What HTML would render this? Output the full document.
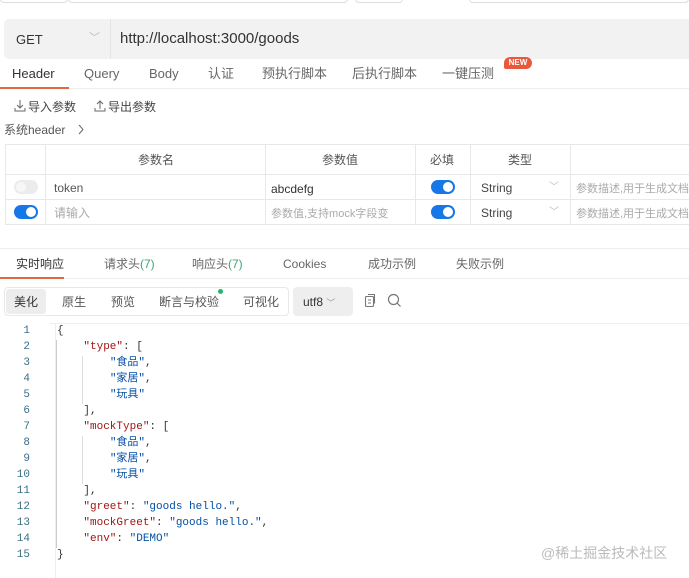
<!DOCTYPE html>
<html><head><meta charset="utf-8"><style>
*{margin:0;padding:0;box-sizing:border-box}
body{width:689px;height:578px;overflow:hidden;background:#fff;font-family:"Liberation Sans","Noto Sans CJK SC",sans-serif;font-size:13px;color:#333;position:relative}
.a{position:absolute;white-space:nowrap;line-height:16px}
.tog{position:absolute;width:24px;height:14px;border-radius:7px}
.tog.on{background:#1677e6}
.tog.on::after{content:"";position:absolute;right:2px;top:2px;width:10px;height:10px;border-radius:50%;background:#fff}
.tog.off{background:#ececec}
.tog.off::after{content:"";position:absolute;left:2px;top:2px;width:10px;height:10px;border-radius:50%;background:#f7f7f7}
.code{position:absolute;font-family:"Liberation Mono","Noto Sans CJK SC",monospace;font-size:11px;line-height:16px}
.k{color:#a31515}.v{color:#0451a5}
.ln{color:#3a6f87;text-align:right;width:30px}
</style></head><body>
<div class="a" style="left:0;top:-10px;width:68px;height:13px;border:1px solid #ddd;border-radius:4px"></div>
<div class="a" style="left:68px;top:-10px;width:280px;height:13px;border:1px solid #ddd;border-radius:4px"></div>
<div class="a" style="left:355px;top:-10px;width:48px;height:13px;border:1px solid #ddd;border-radius:4px"></div>
<div class="a" style="left:469px;top:-10px;width:220px;height:13px;border:1px solid #ddd;border-radius:4px"></div>
<div class="a" style="left:4px;top:19px;width:690px;height:40px;background:#f2f2f2;border-radius:5px"></div>
<div class="a" style="left:110px;top:19px;width:1px;height:40px;background:#e4e4e4"></div>
<div class="a" style="left:16px;top:32px;font-size:13px;color:#333">GET</div>
<div class="a" style="left:89px;top:30px;color:#bbb;font-size:11px">﹀</div>
<div class="a" style="left:120px;top:31px;font-size:15px;color:#333">http://localhost:3000/goods</div>
<div class="a" style="left:12px;top:66px">Header</div>
<div class="a" style="left:84px;top:66px;color:#666">Query</div>
<div class="a" style="left:149px;top:66px;color:#666">Body</div>
<div class="a" style="left:208px;top:66px;color:#666">认证</div>
<div class="a" style="left:262px;top:66px;color:#666">预执行脚本</div>
<div class="a" style="left:352px;top:66px;color:#666">后执行脚本</div>
<div class="a" style="left:442px;top:66px;color:#666">一键压测</div>
<div class="a" style="left:504px;top:57px;width:28px;height:12px;background:#e8593b;border-radius:6px 6px 6px 2px;color:#fff;font-size:8px;font-weight:bold;text-align:center;line-height:12px">NEW</div>
<div class="a" style="left:0;top:88px;width:689px;height:1px;background:#eee"></div>
<div class="a" style="left:0;top:87px;width:69px;height:2px;background:#e2693f"></div>
<svg class="a" style="left:14px;top:99px" width="12" height="13" viewBox="0 0 12 13" fill="none" stroke="#666" stroke-width="1"><path d="M6 1v8M3 6l3 3 3-3M1 9v3h10V9"/></svg>
<div class="a" style="left:28px;top:99px;font-size:12px;color:#444">导入参数</div>
<svg class="a" style="left:94px;top:99px" width="12" height="13" viewBox="0 0 12 13" fill="none" stroke="#666" stroke-width="1"><path d="M6 10V2M3 5l3-3 3 3M1 9v3h10V9"/></svg>
<div class="a" style="left:108px;top:99px;font-size:12px;color:#444">导出参数</div>
<div class="a" style="left:4px;top:122px;font-size:12px;color:#555">系统header</div>
<svg class="a" style="left:77px;top:124px" width="8" height="11" viewBox="0 0 8 11" fill="none" stroke="#666"><path d="M2 1l4 4.5L2 10"/></svg>
<div class="a" style="left:5px;top:144px;width:690px;height:81px;border:1px solid #e8e8e8"></div>
<div class="a" style="left:5px;top:174px;width:690px;height:1px;background:#e8e8e8"></div>
<div class="a" style="left:5px;top:199px;width:690px;height:1px;background:#e8e8e8"></div>
<div class="a" style="left:45px;top:144px;width:1px;height:81px;background:#e8e8e8"></div>
<div class="a" style="left:265px;top:144px;width:1px;height:81px;background:#e8e8e8"></div>
<div class="a" style="left:415px;top:144px;width:1px;height:81px;background:#e8e8e8"></div>
<div class="a" style="left:470px;top:144px;width:1px;height:81px;background:#e8e8e8"></div>
<div class="a" style="left:570px;top:144px;width:1px;height:81px;background:#e8e8e8"></div>
<div class="a" style="left:138px;top:152px;font-size:12px;color:#555">参数名</div>
<div class="a" style="left:322px;top:152px;font-size:12px;color:#555">参数值</div>
<div class="a" style="left:430px;top:152px;font-size:12px;color:#555">必填</div>
<div class="a" style="left:508px;top:152px;font-size:12px;color:#555">类型</div>
<div class="tog off" style="left:14px;top:180px"></div>
<div class="a" style="left:54px;top:180px;font-size:12px;color:#555">token</div>
<div class="a" style="left:271px;top:181px;font-size:12px;color:#333">abcdefg</div>
<div class="tog on" style="left:431px;top:180px"></div>
<div class="a" style="left:481px;top:180px;font-size:12px;color:#444">String</div>
<div class="a" style="left:549px;top:180px;font-size:10px;color:#bbb">﹀</div>
<div class="a" style="left:576px;top:181px;font-size:11px;color:#aaa">参数描述,用于生成文档</div>
<div class="tog on" style="left:14px;top:205px"></div>
<div class="a" style="left:54px;top:205px;font-size:12px;color:#aaa">请输入</div>
<div class="a" style="left:271px;top:206px;font-size:11px;color:#aaa">参数值,支持mock字段变</div>
<div class="tog on" style="left:431px;top:205px"></div>
<div class="a" style="left:481px;top:205px;font-size:12px;color:#444">String</div>
<div class="a" style="left:549px;top:205px;font-size:10px;color:#bbb">﹀</div>
<div class="a" style="left:576px;top:206px;font-size:11px;color:#aaa">参数描述,用于生成文档</div>
<div class="a" style="left:0;top:248px;width:689px;height:1px;background:#eee"></div>
<div class="a" style="left:16px;top:256px;font-size:12px;color:#333">实时响应</div>
<div class="a" style="left:104px;top:256px;font-size:12px;color:#666">请求头<span style="color:#3aa776">(7)</span></div>
<div class="a" style="left:192px;top:256px;font-size:12px;color:#666">响应头<span style="color:#3aa776">(7)</span></div>
<div class="a" style="left:283px;top:256px;font-size:12px;color:#666">Cookies</div>
<div class="a" style="left:368px;top:256px;font-size:12px;color:#666">成功示例</div>
<div class="a" style="left:456px;top:256px;font-size:12px;color:#666">失败示例</div>
<div class="a" style="left:0;top:278px;width:689px;height:1px;background:#eee"></div>
<div class="a" style="left:0;top:277px;width:64px;height:2px;background:#e2693f"></div>
<div class="a" style="left:4px;top:287px;width:285px;height:29px;border:1px solid #e8e8e8;border-radius:4px"></div>
<div class="a" style="left:6px;top:289px;width:40px;height:25px;background:#ededed;border-radius:3px"></div>
<div class="a" style="left:14px;top:294px;font-size:12px;color:#333">美化</div>
<div class="a" style="left:62px;top:294px;font-size:12px;color:#555">原生</div>
<div class="a" style="left:111px;top:294px;font-size:12px;color:#555">预览</div>
<div class="a" style="left:159px;top:294px;font-size:12px;color:#555">断言与校验</div>
<div class="a" style="left:218px;top:289px;width:5px;height:5px;border-radius:50%;background:#22b573"></div>
<div class="a" style="left:243px;top:294px;font-size:12px;color:#555">可视化</div>
<div class="a" style="left:293px;top:287px;width:60px;height:29px;background:#eee;border-radius:4px"></div>
<div class="a" style="left:303px;top:294px;font-size:12px;color:#333">utf8 <span style="color:#999;font-size:9px">﹀</span></div>
<svg class="a" style="left:363px;top:293px" width="14" height="15" viewBox="0 0 14 15" fill="none" stroke="#777" stroke-width="1.1"><rect x="2.5" y="3.5" width="8" height="10" rx="1"/><path d="M5 1.5h6.5v9"/><path d="M5 7h3M5 10h3"/></svg>
<svg class="a" style="left:387px;top:293px" width="15" height="15" viewBox="0 0 15 15" fill="none" stroke="#777" stroke-width="1.2"><circle cx="6.5" cy="6.5" r="5"/><path d="M10 10l3.5 3.5"/></svg>
<div class="a" style="left:50px;top:323px;width:639px;height:1px;background:#eee"></div>
<div class="a" style="left:55px;top:323px;width:1px;height:255px;background:#eee"></div>
<div class="a" style="left:56px;top:340px;width:1px;height:208px;background:#ccc"></div>
<div class="a" style="left:82px;top:356px;width:1px;height:48px;background:#ddd"></div>
<div class="a" style="left:82px;top:436px;width:1px;height:48px;background:#ddd"></div>
<div class="code ln" style="left:0;top:323px">1<br>2<br>3<br>4<br>5<br>6<br>7<br>8<br>9<br>10<br>11<br>12<br>13<br>14<br>15</div>
<div class="code" style="left:57px;top:323px;color:#333;white-space:pre">{
    <span class="k">"type"</span>: [
        <span class="v">"食品"</span>,
        <span class="v">"家居"</span>,
        <span class="v">"玩具"</span>
    ],
    <span class="k">"mockType"</span>: [
        <span class="v">"食品"</span>,
        <span class="v">"家居"</span>,
        <span class="v">"玩具"</span>
    ],
    <span class="k">"greet"</span>: <span class="v">"goods hello."</span>,
    <span class="k">"mockGreet"</span>: <span class="v">"goods hello."</span>,
    <span class="k">"env"</span>: <span class="v">"DEMO"</span>
}</div>
<div class="a" style="left:541px;top:545px;font-size:14px;color:#bbb">@稀土掘金技术社区</div>
</body></html>
